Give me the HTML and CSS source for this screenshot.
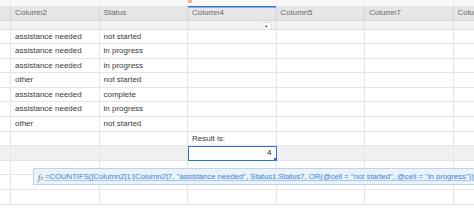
FILE: index.html
```html
<!DOCTYPE html>
<html>
<head>
    <meta charset="UTF-8">
    <title>Hoja</title>
    <link rel="stylesheet" href="styles.css">
</head>
<body>
    <div class="sheet">
        <!-- franja superior (barra de columnas) -->
        <div class="row strip">
            <div class="cell gutter"></div>
            <div class="cell"></div>
            <div class="cell"></div>
            <div class="cell"><span class="mark"></span></div>
            <div class="cell"></div>
            <div class="cell"></div>
            <div class="cell"></div>
        </div>
        <div class="row head">
            <div class="cell gutter"></div>
            <div class="cell">Column2</div>
            <div class="cell">Status</div>
            <div class="cell active-col">Column4</div>
            <div class="cell">Column5</div>
            <div class="cell">Column7</div>
            <div class="cell">Column8</div>
        </div>
        <div class="row filter">
            <div class="cell gutter"></div>
            <div class="cell"></div>
            <div class="cell"></div>
            <div class="cell drop"><span class="drop-btn">&#9662;</span></div>
            <div class="cell"></div>
            <div class="cell"></div>
            <div class="cell"></div>
        </div>

        <div class="row"><div class="cell gutter"></div><div class="cell">assistance needed</div><div class="cell">not started</div><div class="cell"></div><div class="cell"></div><div class="cell"></div><div class="cell"></div></div>
        <div class="row"><div class="cell gutter"></div><div class="cell">assistance needed</div><div class="cell">in progress</div><div class="cell"></div><div class="cell"></div><div class="cell"></div><div class="cell"></div></div>
        <div class="row"><div class="cell gutter"></div><div class="cell">assistance needed</div><div class="cell">in progress</div><div class="cell"></div><div class="cell"></div><div class="cell"></div><div class="cell"></div></div>
        <div class="row"><div class="cell gutter"></div><div class="cell">other</div><div class="cell">not started</div><div class="cell"></div><div class="cell"></div><div class="cell"></div><div class="cell"></div></div>
        <div class="row"><div class="cell gutter"></div><div class="cell">assistance needed</div><div class="cell">complete</div><div class="cell"></div><div class="cell"></div><div class="cell"></div><div class="cell"></div></div>
        <div class="row"><div class="cell gutter"></div><div class="cell">assistance needed</div><div class="cell">in progress</div><div class="cell"></div><div class="cell"></div><div class="cell"></div><div class="cell"></div></div>
        <div class="row"><div class="cell gutter"></div><div class="cell">other</div><div class="cell">not started</div><div class="cell"></div><div class="cell"></div><div class="cell"></div><div class="cell"></div></div>
        <div class="row"><div class="cell gutter"></div><div class="cell"></div><div class="cell"></div><div class="cell">Result is:</div><div class="cell"></div><div class="cell"></div><div class="cell"></div></div>
        <div class="row current"><div class="cell gutter"></div><div class="cell"></div><div class="cell"></div><div class="cell selected">4<span class="handle"></span></div><div class="cell"></div><div class="cell"></div><div class="cell"></div></div>
        <div class="row"><div class="cell gutter"></div><div class="cell"></div><div class="cell"></div><div class="cell"></div><div class="cell"></div><div class="cell"></div><div class="cell"></div></div>
        <div class="row"><div class="cell gutter"></div><div class="cell"></div><div class="cell"></div><div class="cell"></div><div class="cell"></div><div class="cell"></div><div class="cell"></div></div>
        <div class="row"><div class="cell gutter"></div><div class="cell"></div><div class="cell"></div><div class="cell"></div><div class="cell"></div><div class="cell"></div><div class="cell"></div></div>

        <!-- tooltip con la fórmula de la celda -->
        <div class="formula">
            <span class="fx">f<span class="fx-x">x</span></span>
            <span class="expr">=COUNTIFS([Column2]1:[Column2]7, "assistance needed", Status1:Status7, OR(@cell = "not started", @cell = "in progress"))</span>
        </div>
    </div>
</body>
</html>
```

FILE: styles.css
```css
body {
    margin: 0;
    padding: 0;
    background: #fff;
    overflow: hidden;
}

.sheet {
    position: relative;
    font-family: "Liberation Sans", Arial, sans-serif;
    font-size: 8px;
    color: #3a3a3a;
    width: 474px;
    height: 208px;
    overflow: hidden;
}

.row {
    display: grid;
    grid-template-columns: 11px repeat(5, 88.5px) 40px;
    height: 14.6px;
}

.cell {
    position: relative;
    box-sizing: border-box;
    border-right: 1px solid #e6e6e6;
    border-bottom: 1px solid #e6e6e6;
    padding: 0 4px;
    line-height: 13.6px;
    white-space: nowrap;
    overflow: hidden;
}

.gutter {
    padding: 0;
}

.strip {
    height: 6px;
    background: #f9f9f9;
}

.strip .cell {
    border-bottom: none;
    border-right-color: #ededed;
}

.mark {
    position: absolute;
    left: 0;
    top: 0;
    width: 4px;
    height: 3px;
    background: #f3b7a3;
}

.head {
    height: 14.5px;
    background: #e6e6e6;
    color: #666;
}

.head .cell {
    border-right-color: #d6d6d6;
    border-bottom-color: #d9d9d9;
    line-height: 13.5px;
}

.active-col {
    box-shadow: inset 0 1.5px 0 #2f6fd6;
}

.filter {
    height: 9px;
    background: #f3f3f3;
}

.filter .cell {
    border-right-color: #e2e2e2;
    border-bottom-color: #e2e2e2;
}

.drop-btn {
    position: absolute;
    right: 4px;
    top: 1px;
    width: 8px;
    height: 6px;
    background: #fff;
    border: 1px solid #e0e0e0;
    font-size: 5px;
    line-height: 6px;
    text-align: center;
    color: #555;
}

.current {
    background: #f0f0f0;
}

.selected {
    background: #fff;
    border: 1.5px solid #2f6fd6;
    text-align: right;
    color: #222;
    line-height: 11px;
}

.handle {
    position: absolute;
    right: -1px;
    bottom: -1px;
    width: 3px;
    height: 3px;
    background: #2f6fd6;
}

.formula {
    position: absolute;
    left: 33px;
    top: 168px;
    width: 460px;
    height: 17px;
    box-sizing: border-box;
    background: #eaf2fc;
    border: 1px solid #bdd4f1;
    display: flex;
    align-items: center;
    gap: 2px;
    padding-left: 4px;
    white-space: nowrap;
}

.fx {
    font-family: "Liberation Serif", serif;
    font-style: italic;
    font-size: 8.5px;
    color: #666;
}

.fx-x {
    font-size: 6px;
}

.expr {
    font-size: 7.7px;
    color: #3d7fd8;
    text-decoration: underline;
    text-decoration-color: #a8c6ee;
}
```
